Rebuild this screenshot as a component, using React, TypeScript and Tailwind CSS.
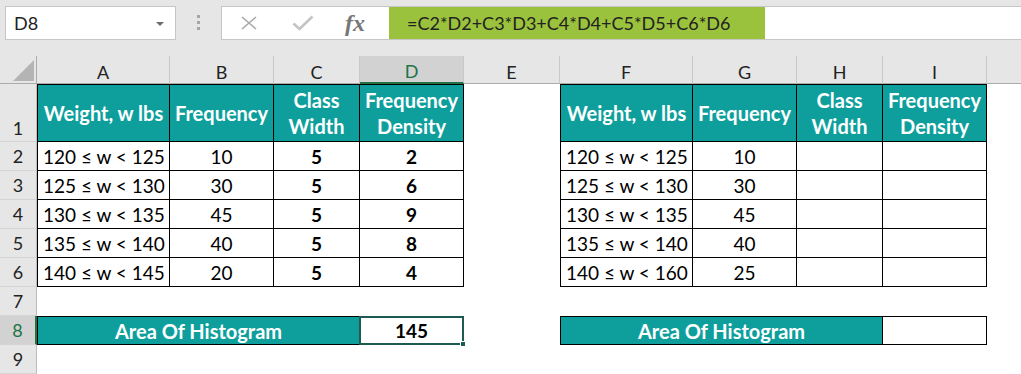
import React from "react";
import clsx from "clsx";

const LEFT_ROWS = [
	["120 ≤ w < 125", "10", "5", "2"],
	["125 ≤ w < 130", "30", "5", "6"],
	["130 ≤ w < 135", "45", "5", "9"],
	["135 ≤ w < 140", "40", "5", "8"],
	["140 ≤ w < 145", "20", "5", "4"],
];

const RIGHT_ROWS = [
	["120 ≤ w < 125", "10"],
	["125 ≤ w < 130", "30"],
	["130 ≤ w < 135", "45"],
	["135 ≤ w < 140", "40"],
	["140 ≤ w < 160", "25"],
];

const COLS = ["A", "B", "C", "D", "E", "F", "G", "H", "I"];

const TEAL = "bg-[#0e9f9d] text-white font-bold text-[20px]";
const BOX = "border-r border-b border-black";

function FormulaBar() {
	return (
		<div className="flex h-[56px] items-start bg-[#e6e6e6] pt-[6px]">
			<div className="ml-[5px] flex h-[34px] w-[171px] items-center justify-between border border-[#c6c6c6] bg-white pl-[8px] pr-[11px]">
				<span className="text-[18px] leading-none text-[#222]">D8</span>
				<span className="mt-[1px] h-0 w-0 border-x-[4px] border-t-[4px] border-x-transparent border-t-[#6b6b6b]" />
			</div>
			<div className="flex w-[45px] flex-col items-center gap-[3px] pt-[9px]">
				<span className="h-[3px] w-[3px] bg-[#a6a6a6]" />
				<span className="h-[3px] w-[3px] bg-[#a6a6a6]" />
				<span className="h-[3px] w-[3px] bg-[#a6a6a6]" />
			</div>
			<div className="flex h-[34px] flex-1 border border-r-0 border-[#c6c6c6] bg-white">
				<div className="flex w-[167px] items-center">
					<svg className="ml-[18px]" width="18" height="14" viewBox="0 0 18 14">
						<path d="M2 1 L16 13 M16 1 L2 13" stroke="#a8a8a8" strokeWidth="1.6" fill="none" />
					</svg>
					<svg className="ml-[34px]" width="22" height="16" viewBox="0 0 22 16">
						<path d="M1.5 8.5 L7.5 14 L20.5 1.5" stroke="#c4c4c4" strokeWidth="2.6" fill="none" />
					</svg>
					<span className="ml-[31px] font-['Liberation_Serif',serif] text-[24px] font-bold italic leading-none text-[#777]">
						fx
					</span>
				</div>
				<div className="flex w-[376px] items-center bg-[#9bc23c] pl-[18px] text-[18px] text-[#222]">
					=C2*D2+C3*D3+C4*D4+C5*D5+C6*D6
				</div>
			</div>
		</div>
	);
}

function ColHead({ label, selected }: { label: string; selected?: boolean }) {
	return (
		<div
			className={clsx(
				"flex items-center justify-center border-r border-[#c8c8c8] text-[18px] leading-none",
				selected ? "border-b-2 border-b-[#217346] bg-[#d2d2d2] text-[#217346]" : "border-b border-b-[#acacac] bg-[#e6e6e6] text-[#222]"
			)}>
			<span className="mt-[4px]">{label}</span>
		</div>
	);
}

function RowHead({ n, selected, tall }: { n: number; selected?: boolean; tall?: boolean }) {
	return (
		<div
			className={clsx(
				"flex justify-center border-b border-b-[#d4d4d4] text-[18px] leading-none",
				tall ? "items-end pb-[4px]" : "items-center",
				selected ? "border-r-2 border-r-[#217346] bg-[#d2d2d2] text-[#217346]" : "border-r border-r-[#bdbdbd] bg-[#e6e6e6] text-[#222]"
			)}>
			{n}
		</div>
	);
}

function Cell({ children, className }: { children?: React.ReactNode; className?: string }) {
	return <div className={clsx("flex items-center text-[19px] leading-none", className)}>{children}</div>;
}

function TwoLine({ a, b }: { a: string; b: string }) {
	return (
		<Cell className={clsx(TEAL, BOX, "flex-col justify-center gap-[6px] border-t")}>
			<span>{a}</span>
			<span>{b}</span>
		</Cell>
	);
}

function HeaderCells() {
	return (
		<>
			<Cell className={clsx(TEAL, BOX, "justify-center border-l border-t")}>Weight, w lbs</Cell>
			<Cell className={clsx(TEAL, BOX, "justify-center border-t")}>Frequency</Cell>
			<TwoLine a="Class" b="Width" />
			<TwoLine a="Frequency" b="Density" />
		</>
	);
}

export default function App() {
	return (
		<div className="h-[374px] w-[1021px] overflow-hidden bg-white font-[family-name:Lato,'Liberation_Sans',sans-serif] text-black">
			<FormulaBar />
			<div className="grid grid-cols-[37px_133px_104px_86px_104px_96px_133px_104px_86px_104px_1fr] grid-rows-[28px_58px_repeat(8,29px)]">
				{/* column headers */}
				<div className="relative border-r border-b border-[#acacac] bg-[#e6e6e6]">
					<svg className="absolute left-[13px] top-[4px]" width="21" height="21" viewBox="0 0 21 21">
						<path d="M21 0 L21 21 L0 21 Z" fill="#b4b4b4" />
					</svg>
				</div>
				{COLS.map((c) => (
					<ColHead key={c} label={c} selected={c === "D"} />
				))}
				<div className="border-b border-b-[#acacac] bg-[#e6e6e6]" />

				{/* row 1 */}
				<RowHead n={1} tall />
				<HeaderCells />
				<Cell />
				<HeaderCells />
				<Cell />

				{/* rows 2-6 */}
				{LEFT_ROWS.map((r, i) => (
					<React.Fragment key={i}>
						<RowHead n={i + 2} />
						<Cell className={clsx(BOX, "border-l pl-[5px]")}>{r[0]}</Cell>
						<Cell className={clsx(BOX, "justify-center")}>{r[1]}</Cell>
						<Cell className={clsx(BOX, "justify-center font-bold")}>{r[2]}</Cell>
						<Cell className={clsx(BOX, "justify-center font-bold")}>{r[3]}</Cell>
						<Cell />
						<Cell className={clsx(BOX, "border-l pl-[5px]")}>{RIGHT_ROWS[i][0]}</Cell>
						<Cell className={clsx(BOX, "justify-center")}>{RIGHT_ROWS[i][1]}</Cell>
						<Cell className={BOX} />
						<Cell className={BOX} />
						<Cell />
					</React.Fragment>
				))}

				{/* row 7 */}
				<RowHead n={7} />
				<div className="col-span-10" />

				{/* row 8 */}
				<RowHead n={8} selected />
				<Cell className={clsx(TEAL, "col-span-3 justify-center border border-black")}>Area Of Histogram</Cell>
				<Cell className="relative justify-center border-y border-r border-black font-bold">
					145
					<span className="absolute -inset-[1px] border-2 border-[#1d5a50]" />
					<span className="absolute -bottom-[3px] -right-[3px] h-[6px] w-[6px] border border-white bg-[#1d5a50]" />
				</Cell>
				<Cell />
				<Cell className={clsx(TEAL, "col-span-3 justify-center border border-black")}>Area Of Histogram</Cell>
				<Cell className="border-y border-r border-black" />
				<Cell />

				{/* row 9 */}
				<RowHead n={9} />
				<div className="col-span-10" />
			</div>
		</div>
	);
}
